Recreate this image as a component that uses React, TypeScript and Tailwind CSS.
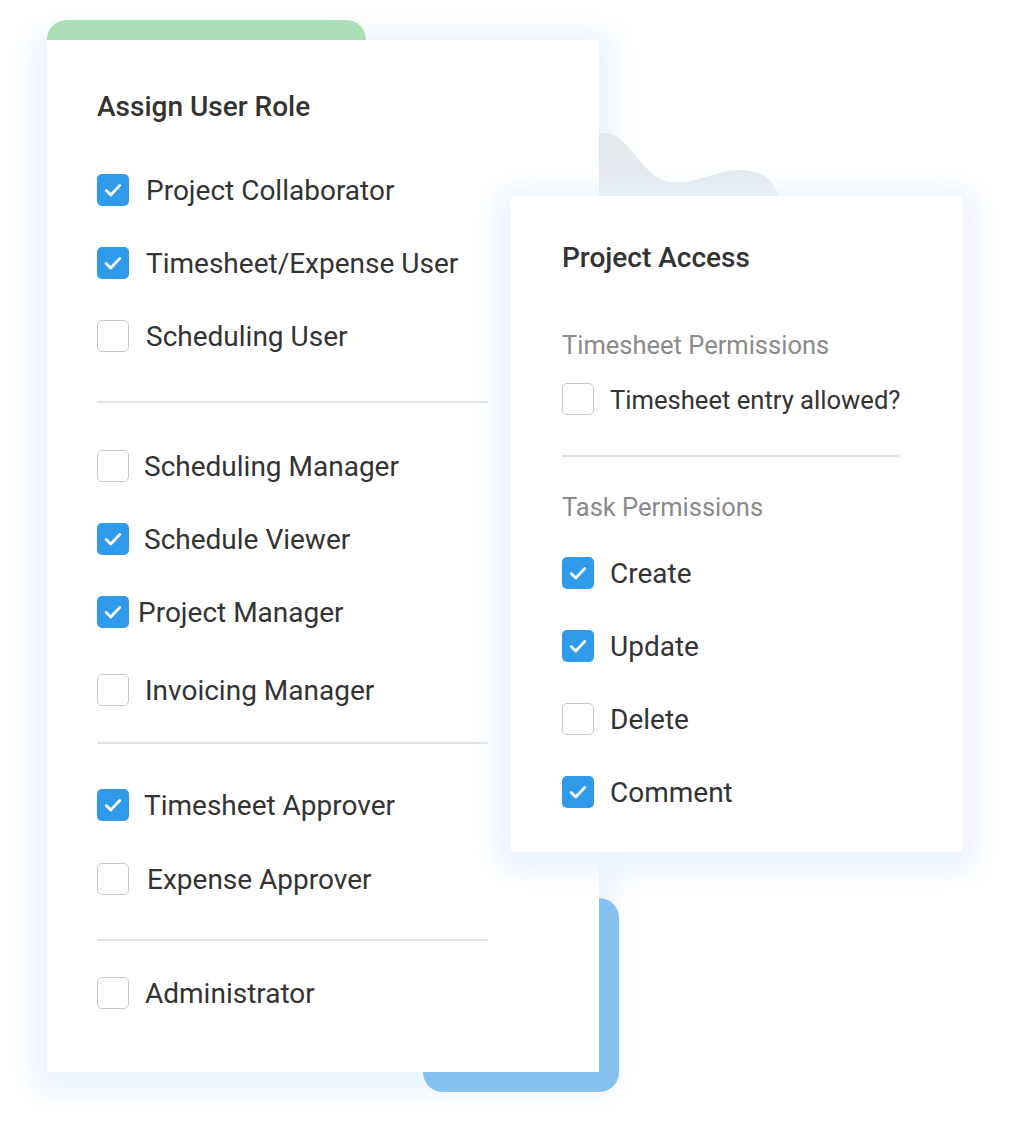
import React from "react";

type Row = { label: string; checked: boolean; mt: number; ml?: number; size?: number };

function Box({ checked }: { checked: boolean }) {
  if (checked) {
    return (
      <div className="w-[32px] h-[32px] shrink-0 rounded-[5px] bg-[#2f9bea] flex items-center justify-center">
        <svg width="32" height="32" viewBox="0 0 32 32" fill="none">
          <path d="M9.2 16.6 L13.8 21 L22.8 11.4" stroke="#ffffff" strokeWidth="2.8" strokeLinecap="round" strokeLinejoin="round" />
        </svg>
      </div>
    );
  }
  return <div className="w-[32px] h-[32px] shrink-0 rounded-[5px] border border-[#c9c9c9] bg-white" />;
}

function Item({ row }: { row: Row }) {
  return (
    <div className="flex items-center h-[32px]" style={{ marginTop: row.mt }}>
      <Box checked={row.checked} />
      <span
        className="leading-[32px] text-[#333333] whitespace-nowrap pt-[2px]"
        style={{ marginLeft: row.ml ?? 17, fontSize: row.size ?? 28 }}
      >
        {row.label}
      </span>
    </div>
  );
}

function Divider({ mt, w }: { mt: number; w: number }) {
  return <div className="h-[2px] bg-[#e2e2e2]" style={{ marginTop: mt, width: w }} />;
}

export default function App() {
  return (
    <div
      className="relative w-[1012px] h-[1126px] bg-white overflow-hidden"
      style={{ fontFamily: "Roboto, 'Noto Sans', sans-serif" }}
    >
      {/* halo behind left card */}
      <div className="absolute left-[47px] top-[40px] w-[552px] h-[1032px] shadow-[0_6px_26px_14px_rgba(232,242,253,0.85)]" />
      {/* green tab */}
      <div className="absolute left-[47px] top-[20px] w-[319px] h-[60px] rounded-t-[20px] bg-[#abdfb5]" />
      {/* blue accent */}
      <div className="absolute left-[423px] top-[898px] w-[196px] h-[194px] rounded-[20px] bg-[#85c2f0]" />
      {/* grey wave */}
      <svg className="absolute left-[599px] top-[130px]" width="180" height="70" viewBox="0 0 180 70">
        <path
          d="M0 4 Q10 0 22 10 C38 24 50 49 71 52 C95 56 115 40 141 40 C166 40 179 54 179 70 L0 70 Z"
          fill="#e4e9ee"
        />
      </svg>

      {/* left card */}
      <div className="absolute left-[47px] top-[40px] w-[552px] h-[1032px] bg-white pl-[50px] pt-[50px]">
        <div className="text-[28px] leading-[32px] font-medium text-[#333333] pt-[1px]">Assign User Role</div>
        <Item row={{ label: "Project Collaborator", checked: true, mt: 51 }} />
        <Item row={{ label: "Timesheet/Expense User", checked: true, mt: 41 }} />
        <Item row={{ label: "Scheduling User", checked: false, mt: 41 }} />
        <Divider mt={49} w={391} />
        <Item row={{ label: "Scheduling Manager", checked: false, mt: 47, ml: 15 }} />
        <Item row={{ label: "Schedule Viewer", checked: true, mt: 41, ml: 15 }} />
        <Item row={{ label: "Project Manager", checked: true, mt: 41, ml: 9 }} />
        <Item row={{ label: "Invoicing Manager", checked: false, mt: 46, ml: 16 }} />
        <Divider mt={36} w={391} />
        <Item row={{ label: "Timesheet Approver", checked: true, mt: 45, ml: 15 }} />
        <Item row={{ label: "Expense Approver", checked: false, mt: 42, ml: 18 }} />
        <Divider mt={44} w={391} />
        <Item row={{ label: "Administrator", checked: false, mt: 36, ml: 16 }} />
      </div>

      {/* right card */}
      <div className="absolute left-[510px] top-[196px] w-[453px] h-[656px] bg-white rounded-[5px] pl-[52px] pt-[45px] shadow-[0_6px_26px_14px_rgba(232,242,253,0.85)]">
        <div className="text-[28px] leading-[32px] font-medium text-[#333333] pt-[1px]">Project Access</div>
        <div className="mt-[55px] text-[25.5px] leading-[32px] text-[#8a8a8a]">Timesheet Permissions</div>
        <Item row={{ label: "Timesheet entry allowed?", checked: false, mt: 22, ml: 16, size: 25.6 }} />
        <Divider mt={40} w={338} />
        <div className="mt-[34px] text-[25.5px] leading-[32px] text-[#8a8a8a]">Task Permissions</div>
        <Item row={{ label: "Create", checked: true, mt: 34, ml: 16 }} />
        <Item row={{ label: "Update", checked: true, mt: 41, ml: 16 }} />
        <Item row={{ label: "Delete", checked: false, mt: 41, ml: 16 }} />
        <Item row={{ label: "Comment", checked: true, mt: 41, ml: 16 }} />
      </div>
    </div>
  );
}
